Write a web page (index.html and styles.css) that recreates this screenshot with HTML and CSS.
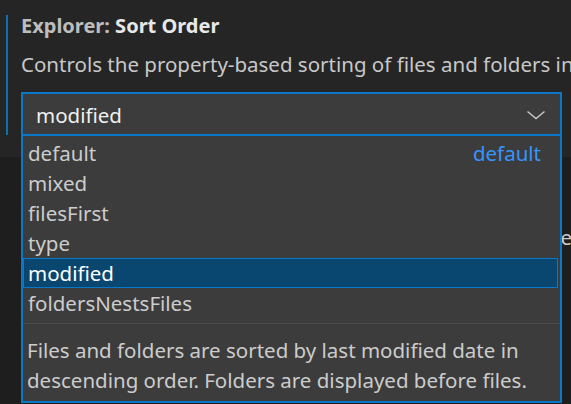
FILE: index.html
```html
<!DOCTYPE html>
<html lang="en">
<head>
<meta charset="utf-8">
<title>Settings</title>
<link rel="stylesheet" href="styles.css">
</head>
<body>
<div class="page">
  <section class="setting">
    <div class="setting-body">
      <div class="setting-title"><span class="category">Explorer: </span><span class="label">Sort Order</span></div>
      <div class="setting-desc">Controls the property-based sorting of files and folders in</div>
      <div class="select-box">
        <span class="select-value">modified</span>
        <svg class="chevron" width="20" height="10" viewBox="0 0 20 10"><path d="M1.5 1.5 L10 8.5 L18.5 1.5" fill="none" stroke="#c5c5c5" stroke-width="1.6"/></svg>
      </div>
    </div>
  </section>
  <section class="editor-rest">
    <div class="next-line">Controls how file nesting works in the tree</div>
  </section>

  <div class="dropdown">
    <ul class="options">
      <li class="option"><span>default</span><span class="tag">default</span></li>
      <li class="option"><span>mixed</span></li>
      <li class="option"><span>filesFirst</span></li>
      <li class="option"><span>type</span></li>
      <li class="option selected"><span>modified</span></li>
      <li class="option"><span>foldersNestsFiles</span></li>
    </ul>
    <div class="option-detail">Files and folders are sorted by last modified date in descending order. Folders are displayed before files.</div>
  </div>
</div>
</body>
</html>
```
FILE: styles.css
```css
* { box-sizing: border-box; }

html, body {
  margin: 0;
  padding: 0;
  width: 571px;
  height: 404px;
  overflow: hidden;
  background: #1e1e1e;
}

.page {
  position: relative;
  width: 571px;
  height: 404px;
  overflow: hidden;
  font-family: "Noto Sans", "Open Sans", sans-serif;
  font-size: 20.5px;
  color: #cccccc;
}

.setting {
  background: #252526;
  height: 157px;
  padding-top: 15px;
  padding-left: 6px;
}

.setting-body {
  border-left: 2px solid #0f6fae;
  padding-left: 13px;
}

.setting-title {
  line-height: 22px;
  height: 22px;
  font-size: 20px;
  font-weight: 700;
  white-space: nowrap;
}

.category { color: #bdbdbd; }
.label { color: #e8e8e8; }

.setting-desc {
  margin-top: 14px;
  line-height: 26px;
  white-space: nowrap;
  color: #c8c8c8;
}

.select-box {
  margin-top: 15px;
  width: 541px;
  height: 43px;
  background: #3c3c3c;
  border: 2px solid #0a78c6;
  border-bottom: none;
  display: flex;
  align-items: center;
  justify-content: space-between;
  padding: 0 14px 0 13px;
  color: #f0f0f0;
}

.select-value { line-height: 26px; }

.chevron { display: block; }

.editor-rest {
  height: 247px;
  padding-top: 67px;
}

.next-line {
  text-align: right;
  white-space: nowrap;
  line-height: 26px;
  color: #cccccc;
  margin-right: -1px;
}

/* drop-down list shown over the page */
.dropdown {
  position: absolute;
  left: 21px;
  top: 134px;
  width: 541px;
  height: 269px;
  background: #3c3c3c;
  border: 2px solid #0a78c6;
  display: flex;
  flex-direction: column;
}

.options {
  list-style: none;
  margin: 0;
  padding: 2px 2px 5px 0;
  border-bottom: 1px solid #4a4a4a;
}

.option {
  height: 30px;
  display: flex;
  align-items: center;
  justify-content: space-between;
  padding: 0 16px 0 4px;
  color: #cccccc;
  border: 1px solid transparent;
}

.option .tag { color: #3794ff; }

.option.selected {
  background: #094771;
  border-color: #0a78c6;
  color: #ffffff;
}

.option-detail {
  padding: 11px 6px 0 4px;
  line-height: 30px;
  color: #cccccc;
}
```
